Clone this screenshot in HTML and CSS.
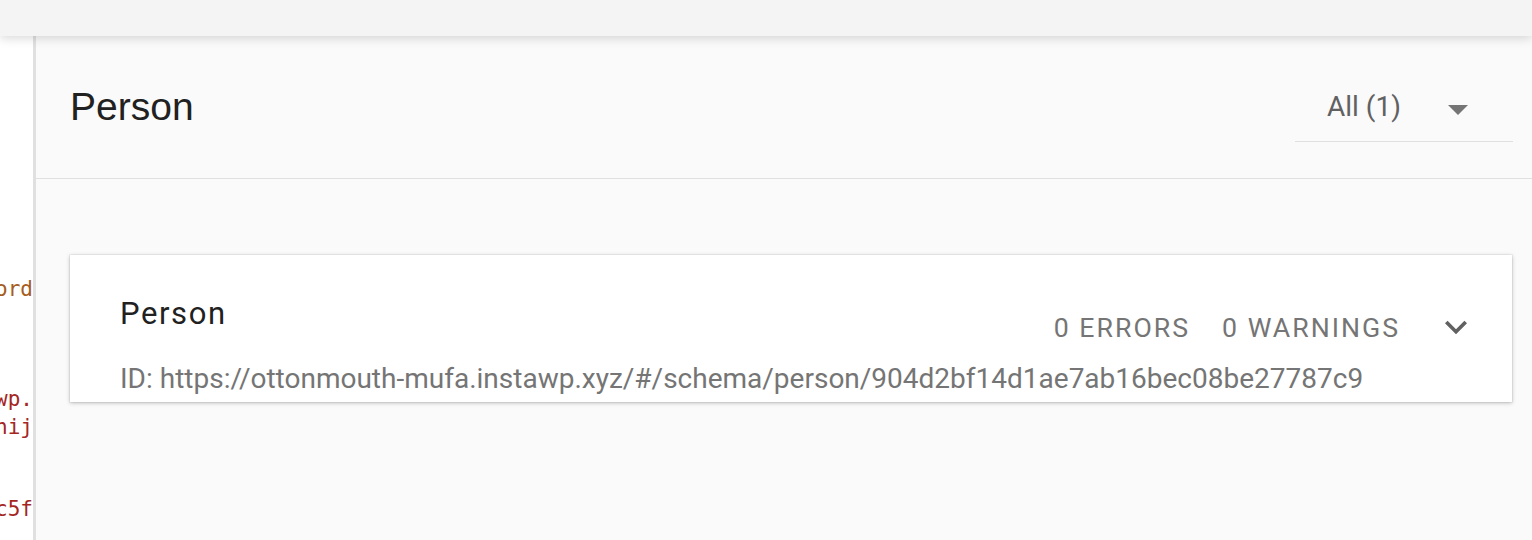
FILE: index.html
```html
<!DOCTYPE html>
<html>
<head>
<meta charset="utf-8">
<link rel="stylesheet" href="styles.css">
</head>
<body>
<div class="topbar"></div>
<div class="layout">
  <div class="code">
    <div class="ln"></div><div class="ln"></div><div class="ln"></div><div class="ln"></div>
    <div class="ln"></div><div class="ln"></div><div class="ln"></div><div class="ln"></div>
    <div class="ln"><span class="kw">"@type": "Record</span></div>
    <div class="ln"></div><div class="ln"></div><div class="ln"></div>
    <div class="ln"><span class="str">"https://ottonmouth-mufa.instawp.</span></div>
    <div class="ln"><span class="str">"xyz/#/schema/person/abcdefghij</span></div>
    <div class="ln"></div><div class="ln"></div>
    <div class="ln"><span class="str">"904d2bf14d1ae7ab16bec5f</span></div>
  </div>
  <div class="divider"></div>
  <div class="main">
    <div class="header">
      <h1 class="title">Person</h1>
      <div class="dropdown">
        <span class="dd-label">All (1)</span>
        <svg class="dd-arrow" viewBox="0 0 24 24" width="48" height="48"><path d="M7 10l5 5 5-5z" fill="#757575"/></svg>
      </div>
    </div>
    <div class="card">
      <div class="card-row">
        <div class="card-title">Person</div>
        <div class="status">
          <span class="stat">0 ERRORS</span>
          <span class="stat">0 WARNINGS</span>
        </div>
        <svg class="chev" viewBox="0 0 24 24" width="44" height="44"><path d="M16.59 8.59L12 13.17 7.41 8.59 6 10l6 6 6-6z" fill="#616161"/></svg>
      </div>
      <div class="card-id">ID: https://ottonmouth-mufa.instawp.xyz/#/schema/person/904d2bf14d1ae7ab16bec08be27787c9</div>
    </div>
  </div>
</div>
</body>
</html>
```

FILE: styles.css
```css
html, body {
  margin: 0;
  padding: 0;
}
body {
  width: 1532px;
  height: 540px;
  overflow: hidden;
  background: #fafafa;
  font-family: Roboto, "Liberation Sans", sans-serif;
}
.topbar {
  position: relative;
  z-index: 2;
  height: 36px;
  background: #f4f4f4;
  box-shadow: 0 2px 10px rgba(0, 0, 0, 0.16);
}
.layout {
  display: flex;
  height: 504px;
}
.code {
  width: 33px;
  flex: none;
  background: #fff;
  overflow: hidden;
  padding-top: 20px;
  box-sizing: border-box;
  font-family: "DejaVu Sans Mono", monospace;
  font-size: 21px;
  line-height: 27.5px;
}
.ln {
  height: 27.5px;
  display: flex;
  justify-content: flex-end;
  white-space: pre;
}
.kw { color: #a65c1b; }
.str { color: #a4261f; }
.divider {
  width: 3px;
  flex: none;
  background: #e0e0e0;
}
.main {
  flex: 1;
  min-width: 0;
}
.header {
  display: flex;
  justify-content: space-between;
  align-items: flex-start;
  padding: 49px 19px 0 34px;
  height: 143px;
  box-sizing: border-box;
  border-bottom: 1px solid #e0e0e0;
}
.title {
  margin: 0;
  font-family: "Liberation Sans", Arial, sans-serif;
  font-weight: 400;
  font-size: 39px;
  line-height: 44px;
  color: #212121;
}
.dropdown {
  margin-top: 1px;
  width: 218px;
  height: 56px;
  box-sizing: border-box;
  padding: 0 31px 0 32px;
  border-bottom: 1px solid #e0e0e0;
  display: flex;
  justify-content: space-between;
  align-items: flex-start;
}
.dd-label {
  margin-top: 5px;
  font-size: 28px;
  line-height: 32px;
  color: #616161;
}
.dd-arrow {
  margin-top: -1px;
  display: block;
}
.card {
  margin: 76px 20px 0 34px;
  height: 147px;
  box-sizing: border-box;
  background: #fff;
  box-shadow: 0 1px 4px rgba(0, 0, 0, 0.25), 0 0 0 1px rgba(0, 0, 0, 0.04);
  padding: 41px 45px 0 50px;
}
.card-row {
  display: flex;
  align-items: flex-start;
  height: 36px;
}
.card-title {
  flex: 1;
  font-size: 31px;
  line-height: 36px;
  letter-spacing: 1.6px;
  color: #212121;
}
.status {
  display: flex;
  gap: 32px;
  margin-top: 17px;
  margin-right: 34px;
}
.stat {
  font-size: 26.7px;
  line-height: 30px;
  letter-spacing: 2px;
  color: #757575;
}
.chev {
  display: block;
  margin: 9px -11px 0 0;
}
.card-id {
  margin-top: 31px;
  font-size: 28px;
  line-height: 32px;
  color: #757575;
  white-space: nowrap;
}
```
